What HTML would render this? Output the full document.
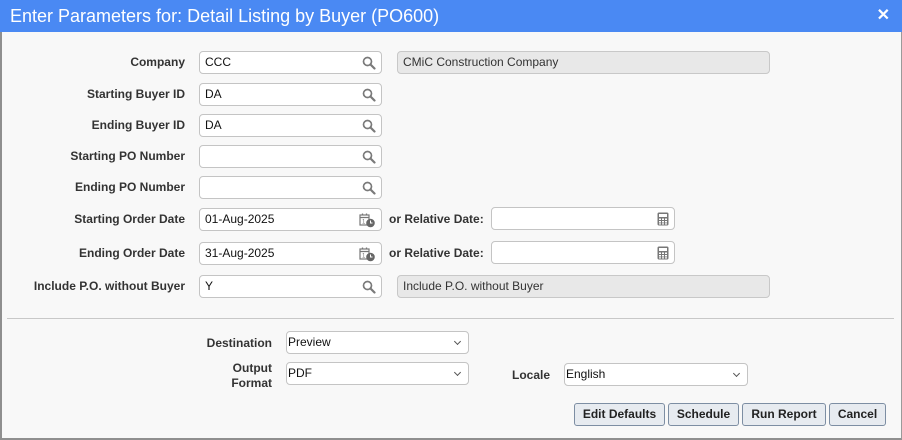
<!DOCTYPE html>
<html><head><style>
*{box-sizing:border-box;margin:0;padding:0}
body{width:902px;height:440px;overflow:hidden;background:#f8f8f8;font-family:"Liberation Sans",Arial,sans-serif;font-size:12px;color:#333;position:relative}
.frame{position:absolute;left:0;top:0;width:902px;height:440px;border:1px solid #9a9a9a;border-left:2px solid #8f8f8f;border-bottom:2px solid #8f8f8f}
.title{position:absolute;left:0;top:0;width:902px;height:32px;background:#4a89f3;color:#fff;font-size:18px;line-height:32px;padding-left:10px}
.x{position:absolute;right:12px;top:0;color:#fff;font-size:16px;font-weight:bold;line-height:32px}
.lbl{position:absolute;font-weight:bold;text-align:right;color:#333;font-size:12px}
.in{position:absolute;height:23px;background:#fff;border:1px solid #c4c4c4;border-radius:4px;font-size:12px;line-height:21px;padding-left:5px;color:#111}
.ro{position:absolute;height:23px;background:#e8e8e8;border:1px solid #c8c8c8;border-radius:4px;line-height:21px;padding-left:5px;color:#333}
.ic{position:absolute;right:5px;top:4px}
.sel{position:absolute;height:23px;background:#fff;border:1px solid #c4c4c4;border-radius:4px;line-height:21px;padding-left:1px;color:#111}
.sel:after{content:"";position:absolute;right:8px;top:7px;width:4px;height:4px;border-right:1px solid #555;border-bottom:1px solid #555;transform:rotate(45deg)}
.btn{position:absolute;top:403px;height:23px;background:#e7ebf0;border:1px solid #7d8ea3;border-radius:3px;font-weight:bold;font-size:12px;line-height:21px;text-align:center;color:#222}
.sep{position:absolute;left:7px;top:318px;width:887px;height:1px;background:#c8c8c8}
</style></head><body>
<div class="frame"></div>
<div class="title">Enter Parameters for: Detail Listing by Buyer (PO600)</div>
<div class="x">✕</div>

<div class="lbl" style="left:0;width:185px;top:55px">Company</div>
<div class="in" style="left:199px;top:51px;width:183px">CCC<svg class="ic" width="14" height="14" viewBox="0 0 14 14"><circle cx="5.5" cy="5.5" r="4" fill="none" stroke="#7a7a7a" stroke-width="1.7"/><path d="M8.5 8.5L12.5 12.5" stroke="#7a7a7a" stroke-width="2.2" stroke-linecap="round"/></svg></div>
<div class="ro" style="left:397px;top:51px;width:373px">CMiC Construction Company</div>

<div class="lbl" style="left:0;width:185px;top:87px">Starting Buyer ID</div>
<div class="in" style="left:199px;top:83px;width:183px">DA<svg class="ic" width="14" height="14" viewBox="0 0 14 14"><circle cx="5.5" cy="5.5" r="4" fill="none" stroke="#7a7a7a" stroke-width="1.7"/><path d="M8.5 8.5L12.5 12.5" stroke="#7a7a7a" stroke-width="2.2" stroke-linecap="round"/></svg></div>

<div class="lbl" style="left:0;width:185px;top:118px">Ending Buyer ID</div>
<div class="in" style="left:199px;top:114px;width:183px">DA<svg class="ic" width="14" height="14" viewBox="0 0 14 14"><circle cx="5.5" cy="5.5" r="4" fill="none" stroke="#7a7a7a" stroke-width="1.7"/><path d="M8.5 8.5L12.5 12.5" stroke="#7a7a7a" stroke-width="2.2" stroke-linecap="round"/></svg></div>

<div class="lbl" style="left:0;width:185px;top:149px">Starting PO Number</div>
<div class="in" style="left:199px;top:145px;width:183px"><svg class="ic" width="14" height="14" viewBox="0 0 14 14"><circle cx="5.5" cy="5.5" r="4" fill="none" stroke="#7a7a7a" stroke-width="1.7"/><path d="M8.5 8.5L12.5 12.5" stroke="#7a7a7a" stroke-width="2.2" stroke-linecap="round"/></svg></div>

<div class="lbl" style="left:0;width:185px;top:180px">Ending PO Number</div>
<div class="in" style="left:199px;top:176px;width:183px"><svg class="ic" width="14" height="14" viewBox="0 0 14 14"><circle cx="5.5" cy="5.5" r="4" fill="none" stroke="#7a7a7a" stroke-width="1.7"/><path d="M8.5 8.5L12.5 12.5" stroke="#7a7a7a" stroke-width="2.2" stroke-linecap="round"/></svg></div>

<div class="lbl" style="left:0;width:185px;top:212px">Starting Order Date</div>
<div class="in" style="left:199px;top:208px;width:183px">01-Aug-2025<svg class="ic" style="top:3px" width="17" height="16" viewBox="0 0 17 16"><rect x="1" y="3" width="9" height="10" fill="none" stroke="#777" stroke-width="1.2"/><path d="M1 5.5H10M3.5 1.5V3.5M7.5 1.5V3.5" stroke="#777" stroke-width="1.3"/><text x="3" y="11.5" font-size="6" fill="#777" font-family="Liberation Sans">1</text><circle cx="11.5" cy="11" r="4.3" fill="#666"/><path d="M11.5 8.5V11H13.5" stroke="#fff" stroke-width="1" fill="none"/></svg></div>
<div class="lbl" style="left:389px;top:212px">or Relative Date:</div>
<div class="in" style="left:491px;top:207px;width:184px"><svg class="ic" style="top:4px" width="12" height="14" viewBox="0 0 12 14"><rect x="0.5" y="0.5" width="11" height="13" rx="1.5" fill="#777"/><rect x="2" y="2" width="8" height="3" fill="#fff"/><g fill="#fff"><rect x="2" y="6.5" width="2" height="1.5"/><rect x="5" y="6.5" width="2" height="1.5"/><rect x="8" y="6.5" width="2" height="1.5"/><rect x="2" y="9" width="2" height="1.5"/><rect x="5" y="9" width="2" height="1.5"/><rect x="8" y="9" width="2" height="1.5"/><rect x="2" y="11.3" width="2" height="1.2"/><rect x="5" y="11.3" width="2" height="1.2"/><rect x="8" y="11.3" width="2" height="1.2"/></g></svg></div>

<div class="lbl" style="left:0;width:185px;top:246px">Ending Order Date</div>
<div class="in" style="left:199px;top:242px;width:183px">31-Aug-2025<svg class="ic" style="top:3px" width="17" height="16" viewBox="0 0 17 16"><rect x="1" y="3" width="9" height="10" fill="none" stroke="#777" stroke-width="1.2"/><path d="M1 5.5H10M3.5 1.5V3.5M7.5 1.5V3.5" stroke="#777" stroke-width="1.3"/><text x="3" y="11.5" font-size="6" fill="#777" font-family="Liberation Sans">1</text><circle cx="11.5" cy="11" r="4.3" fill="#666"/><path d="M11.5 8.5V11H13.5" stroke="#fff" stroke-width="1" fill="none"/></svg></div>
<div class="lbl" style="left:389px;top:246px">or Relative Date:</div>
<div class="in" style="left:491px;top:241px;width:184px"><svg class="ic" style="top:4px" width="12" height="14" viewBox="0 0 12 14"><rect x="0.5" y="0.5" width="11" height="13" rx="1.5" fill="#777"/><rect x="2" y="2" width="8" height="3" fill="#fff"/><g fill="#fff"><rect x="2" y="6.5" width="2" height="1.5"/><rect x="5" y="6.5" width="2" height="1.5"/><rect x="8" y="6.5" width="2" height="1.5"/><rect x="2" y="9" width="2" height="1.5"/><rect x="5" y="9" width="2" height="1.5"/><rect x="8" y="9" width="2" height="1.5"/><rect x="2" y="11.3" width="2" height="1.2"/><rect x="5" y="11.3" width="2" height="1.2"/><rect x="8" y="11.3" width="2" height="1.2"/></g></svg></div>

<div class="lbl" style="left:0;width:185px;top:279px">Include P.O. without Buyer</div>
<div class="in" style="left:199px;top:275px;width:183px">Y<svg class="ic" width="14" height="14" viewBox="0 0 14 14"><circle cx="5.5" cy="5.5" r="4" fill="none" stroke="#7a7a7a" stroke-width="1.7"/><path d="M8.5 8.5L12.5 12.5" stroke="#7a7a7a" stroke-width="2.2" stroke-linecap="round"/></svg></div>
<div class="ro" style="left:397px;top:275px;width:373px">Include P.O. without Buyer</div>

<div class="sep"></div>

<div class="lbl" style="left:0;width:272px;top:336px">Destination</div>
<div class="sel" style="left:286px;top:331px;width:183px">Preview</div>
<div class="lbl" style="left:0;width:272px;top:361px;line-height:15px">Output<br>Format</div>
<div class="sel" style="left:286px;top:362px;width:183px">PDF</div>
<div class="lbl" style="left:500px;width:50px;top:368px">Locale</div>
<div class="sel" style="left:564px;top:363px;width:184px">English</div>

<div class="btn" style="left:574px;width:91px">Edit Defaults</div>
<div class="btn" style="left:668px;width:71px">Schedule</div>
<div class="btn" style="left:742px;width:84px">Run Report</div>
<div class="btn" style="left:829px;width:57px">Cancel</div>
</body></html>
